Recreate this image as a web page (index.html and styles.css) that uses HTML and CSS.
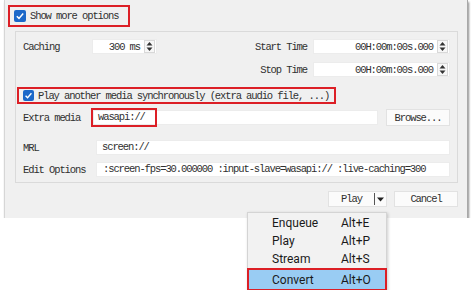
FILE: index.html
```html
<!DOCTYPE html>
<html lang="en">
<head>
    <meta charset="UTF-8">
    <title>Open Media - more options</title>
    <link rel="stylesheet" href="styles.css">
</head>
<body>
    <div class="dialog">
        <label class="check-row show-more">
            <span class="checkbox"><svg width="12" height="12" viewBox="0 0 12 12"><polyline points="2.8,6.2 5,8.4 9.2,3.6" fill="none" stroke="#fff" stroke-width="1.5"/></svg></span>
            Show more options
        </label>

        <div class="group">
            <div class="row">
                <span class="label caching">Caching</span>
                <div class="spin caching-spin">
                    <span class="spin-value">300 ms</span>
                    <span class="spin-arrows"><svg width="7" height="11" viewBox="0 0 7 11"><polygon points="3.5,1 6.5,4.5 0.5,4.5" fill="#333"/><polygon points="0.5,6.5 6.5,6.5 3.5,10" fill="#333"/></svg></span>
                </div>
                <span class="label time-label">Start Time</span>
                <div class="spin time-spin">
                    <span class="spin-value">00H:00m:00s.000</span>
                    <span class="spin-arrows"><svg width="7" height="11" viewBox="0 0 7 11"><polygon points="3.5,1 6.5,4.5 0.5,4.5" fill="#333"/><polygon points="0.5,6.5 6.5,6.5 3.5,10" fill="#333"/></svg></span>
                </div>
            </div>
            <div class="row row-right">
                <span class="label time-label">Stop Time</span>
                <div class="spin time-spin">
                    <span class="spin-value">00H:00m:00s.000</span>
                    <span class="spin-arrows"><svg width="7" height="11" viewBox="0 0 7 11"><polygon points="3.5,1 6.5,4.5 0.5,4.5" fill="#333"/><polygon points="0.5,6.5 6.5,6.5 3.5,10" fill="#333"/></svg></span>
                </div>
            </div>

            <label class="check-row sync">
                <span class="checkbox small"><svg width="11" height="11" viewBox="0 0 12 12"><polyline points="2.8,6.2 5,8.4 9.2,3.6" fill="none" stroke="#fff" stroke-width="1.5"/></svg></span>
                Play another media synchronously (extra audio file, ...)
            </label>

            <div class="row extra-row">
                <span class="label extra-label">Extra media</span>
                <div class="field extra-field">
                    wasapi://
                    <span class="mark"></span>
                </div>
                <button class="btn browse">Browse...</button>
            </div>
            <div class="row mrl-row">
                <span class="label wide-label">MRL</span>
                <div class="field">screen://</div>
            </div>
            <div class="row opts-row">
                <span class="label wide-label">Edit Options</span>
                <div class="field opts-field">:screen-fps=30.000000 :input-slave=wasapi:// :live-caching=300</div>
            </div>
        </div>

        <div class="buttons">
            <div class="btn split">
                <span class="split-main">Play</span>
                <span class="split-arrow"><svg width="7" height="5" viewBox="0 0 7 5"><polygon points="0,0.5 7,0.5 3.5,4.5" fill="#222"/></svg></span>
            </div>
            <button class="btn cancel">Cancel</button>
        </div>
    </div>

    <div class="menu">
        <div class="menu-item"><span class="menu-text">Enqueue</span><span>Alt+E</span></div>
        <div class="menu-item"><span class="menu-text">Play</span><span>Alt+P</span></div>
        <div class="menu-item"><span class="menu-text">Stream</span><span>Alt+S</span></div>
        <div class="menu-item active"><span class="menu-text">Convert</span><span>Alt+O</span></div>
    </div>
</body>
</html>
```

FILE: styles.css
```css
body {
    margin: 0;
    background-color: #fff;
    font-family: "Liberation Mono", monospace;
    font-size: 10.5px;
    letter-spacing: -1.1px;
    color: #303030;
}
.dialog {
    position: relative;
    margin-left: 4px;
    width: 464px;
    height: 218px;
    box-sizing: border-box;
    padding-top: 5px;
    background-color: #f0f0f0;
    border-left: 1px solid #d6d6d6;
    border-right: 1px solid #a8a8a8;
    box-shadow: 1px 2px 2px rgba(0,0,0,0.45);
}
.check-row {
    display: flex;
    align-items: center;
    box-sizing: border-box;
    border: 2px solid #dc1f26;
    white-space: nowrap;
}
.show-more {
    margin-left: 3px;
    width: 122px;
    height: 22px;
    padding-left: 4px;
    gap: 4px;
}
.checkbox {
    display: inline-flex;
    width: 12px;
    height: 12px;
    background-color: #1c68c9;
    border-radius: 2px;
}
.checkbox.small {
    width: 11px;
    height: 11px;
}
.group {
    margin: 4px 0 0 10px;
    width: 443px;
    box-sizing: border-box;
    padding: 7px 7px 5px 7px;
    border: 1px solid #dadada;
}
.row {
    display: flex;
    align-items: center;
    height: 15px;
}
.row-right {
    justify-content: flex-end;
    margin-top: 8px;
}
.label {
    white-space: nowrap;
}
.caching {
    width: 69px;
}
.time-label {
    margin-left: auto;
    margin-right: 6px;
}
.spin {
    display: flex;
    align-items: center;
    height: 15px;
    box-sizing: border-box;
    background-color: #fff;
    border: 1px solid #ececec;
}
.caching-spin {
    width: 65px;
}
.time-spin {
    width: 137px;
}
.spin-value {
    flex: 1;
    text-align: right;
    padding-right: 4px;
    white-space: nowrap;
}
.spin-arrows {
    display: flex;
    align-items: center;
    justify-content: center;
    width: 11px;
    height: 13px;
    box-sizing: border-box;
    margin-right: 1px;
    border: 1px solid #d8d8d8;
    background-color: #f7f7f7;
}
.sync {
    margin: 10px 0 0 -6px;
    width: 319px;
    height: 17px;
    padding-left: 4px;
    gap: 4px;
}
.field {
    flex: 1;
    height: 15px;
    line-height: 13px;
    box-sizing: border-box;
    padding-left: 5px;
    background-color: #fff;
    border: 1px solid #ececec;
    white-space: nowrap;
    overflow: hidden;
}
.extra-row {
    margin-top: 5px;
    height: 17px;
}
.extra-label {
    width: 70px;
}
.extra-field {
    position: relative;
    overflow: visible;
    padding-left: 4px;
}
.mark {
    position: absolute;
    left: -3px;
    top: -3px;
    width: 66px;
    height: 19px;
    box-sizing: border-box;
    border: 2px solid #dc1f26;
}
.wide-label {
    width: 73px;
}
.mrl-row {
    margin-top: 14px;
}
.opts-row {
    margin-top: 7px;
}
.opts-field {
    padding-left: 6px;
}
.btn {
    box-sizing: border-box;
    height: 17px;
    padding: 0;
    background-color: #fbfbfb;
    border: 1px solid #e2e2e2;
    font-family: inherit;
    font-size: 10.5px;
    letter-spacing: -1.1px;
    color: #303030;
}
.browse {
    width: 64px;
    margin-left: 8px;
}
.buttons {
    display: flex;
    justify-content: flex-end;
    gap: 7px;
    margin-top: 8px;
    padding-right: 9px;
}
.buttons .btn {
    height: 16px;
}
.split {
    display: flex;
    align-items: center;
    width: 59px;
}
.split-main {
    flex: 1;
    text-align: center;
}
.split-arrow {
    display: flex;
    align-items: center;
    justify-content: center;
    width: 11px;
    height: 12px;
    border-left: 1px solid #555;
}
.cancel {
    width: 64px;
}
.menu {
    position: absolute;
    left: 247px;
    top: 212px;
    width: 140px;
    box-sizing: border-box;
    padding: 1px 0 1px;
    background-color: #f2f2f2;
    border: 1px solid #d4d4d4;
    box-shadow: 1px 1px 3px rgba(0,0,0,0.2);
    font-family: Roboto, "Noto Sans", sans-serif;
    font-size: 12px;
    letter-spacing: 0;
    color: #1a1a1a;
}
.menu-item {
    display: flex;
    align-items: center;
    height: 18px;
    padding-left: 24px;
}
.menu-text {
    width: 69px;
}
.menu-item.active {
    height: 19px;
    margin: 0 -1px;
    padding-left: 23px;
    background-color: #99ccf3;
    border: 2px solid #dc1f26;
}
```
